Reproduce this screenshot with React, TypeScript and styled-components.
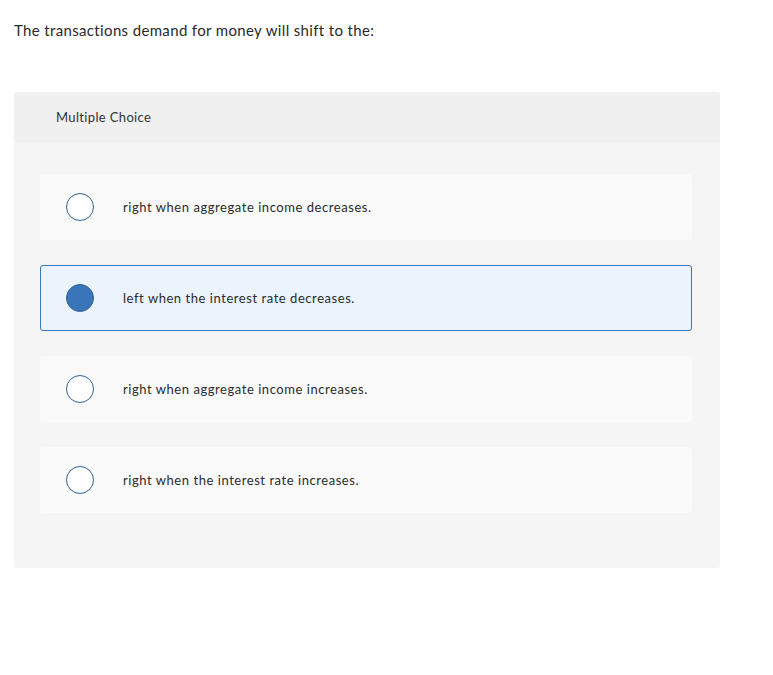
import React from "react";
import styled, { createGlobalStyle } from "styled-components";

const Global = createGlobalStyle`
  html, body { margin: 0; padding: 0; background: #ffffff; }
  body { font-family: Lato, "Open Sans", "Liberation Sans", sans-serif; color: #2b2b2b; }
`;

const Page = styled.div`
  padding: 20px 53px 0 14px;
  width: 706px;
`;

const Question = styled.p`
  margin: 0;
  font-size: 15px;
  line-height: 20px;
  letter-spacing: 0.35px;
  color: #2a2a2a;
`;

const Panel = styled.section`
  margin-top: 52px;
  background: #f5f5f5;
  border-radius: 3px;
  overflow: hidden;
`;

const Header = styled.div`
  height: 50px;
  background: #f0f0f0;
  display: flex;
  align-items: center;
  padding-left: 42px;
  font-size: 13px;
  letter-spacing: 0.35px;
  color: #333;
`;

const List = styled.div`
  display: flex;
  flex-direction: column;
  gap: 25px;
  padding: 32px 28px 55px 26px;
`;

const Option = styled.label<{ $selected?: boolean }>`
  height: 66px;
  box-sizing: border-box;
  display: flex;
  align-items: center;
  padding-left: 25px;
  gap: 29px;
  border-radius: 3px;
  background: ${(p) => (p.$selected ? "#ebf3fc" : "#fafafa")};
  border: 1px solid ${(p) => (p.$selected ? "#3a78c0" : "#fafafa")};
  font-size: 13px;
  letter-spacing: 0.55px;
  color: #2b2b2b;
`;

const Radio = styled.span<{ $selected?: boolean }>`
  width: 28px;
  height: 28px;
  box-sizing: border-box;
  border-radius: 50%;
  border: 1.5px solid #2f6299;
  background: ${(p) => (p.$selected ? "#3a75b9" : "#ffffff")};
  flex: none;
`;

const options = [
  { text: "right when aggregate income decreases.", selected: false },
  { text: "left when the interest rate decreases.", selected: true },
  { text: "right when aggregate income increases.", selected: false },
  { text: "right when the interest rate increases.", selected: false },
];

export default function App() {
  return (
    <>
      <Global />
      <Page>
        <Question>The transactions demand for money will shift to the:</Question>
        <Panel>
          <Header>Multiple Choice</Header>
          <List>
            {options.map((o) => (
              <Option key={o.text} $selected={o.selected}>
                <Radio $selected={o.selected} />
                <span>{o.text}</span>
              </Option>
            ))}
          </List>
        </Panel>
      </Page>
    </>
  );
}
